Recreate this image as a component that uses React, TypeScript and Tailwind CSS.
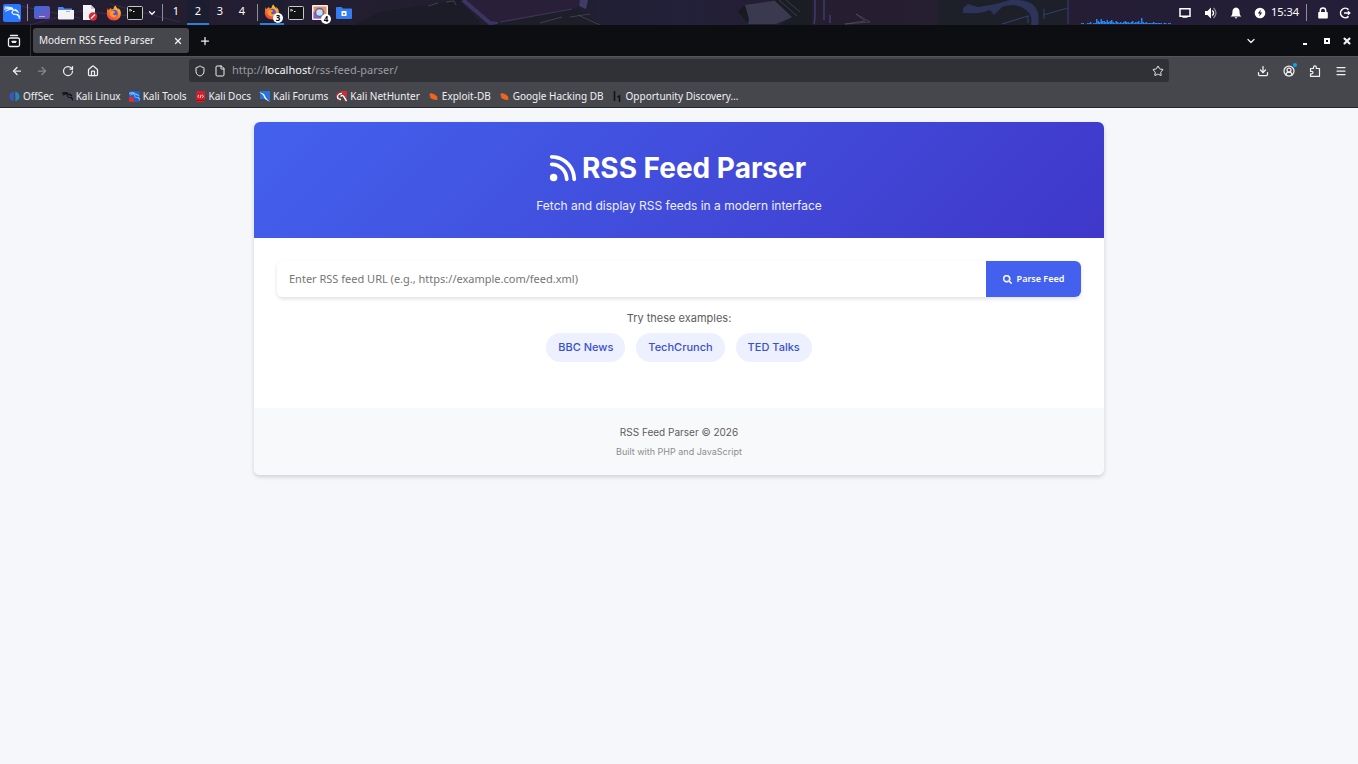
import { useState, type FormEvent, type ReactNode } from "react";
import { FaMagnifyingGlass, FaRss } from "react-icons/fa6";
import { SiKalilinux } from "react-icons/si";
import {
  ArrowLeft,
  ArrowRight,
  ChevronDown,
  CircleUserRound,
  Download,
  File,
  House,
  Menu,
  Plus,
  RotateCw,
  Shield,
  Star,
  X,
} from "lucide-react";

const examples = [
  { name: "BBC News", url: "https://feeds.bbci.co.uk/news/rss.xml" },
  { name: "TechCrunch", url: "https://techcrunch.com/feed/" },
  { name: "TED Talks", url: "https://feeds.feedburner.com/tedtalks_video" },
];

const cpuBars = [1, 1, 0, 0, 1, 1, 2, 0, 1, 1, 5, 3, 2, 5, 3, 3, 2, 4, 2, 3, 4, 2, 1, 3, 2, 1, 2, 1, 2, 3, 2, 2, 1, 2, 3, 1, 2, 2, 3, 1, 6, 2, 1, 2, 1, 1, 1, 1, 2, 1, 1, 1, 1, 1, 0, 1, 1, 0, 1, 1];

function FirefoxIcon() {
  return (
    <svg viewBox="0 0 32 32" className="size-4">
      <defs>
        <linearGradient id="fox" x1="0.8" y1="0" x2="0.2" y2="1">
          <stop offset="0" stopColor="#ffd43b" />
          <stop offset="0.45" stopColor="#ff8a1e" />
          <stop offset="1" stopColor="#f0304f" />
        </linearGradient>
      </defs>
      <path
        d="M29 12c-1-3-3-5-5-6 1 2 1 3 1 4-2-4-5-5-6-9-3 2-4 5-4 7-2 0-3 1-4 1 0-1-1-2-1-3-2 1-3 2-4 4H5c-1-1-1-3-1-4-2 3-2 6-2 8-2 10 5 17 14 17 10 0 16-9 13-19z"
        fill="url(#fox)"
      />
      <circle cx="16" cy="17" r="7.5" fill="#5a50d8" />
      <path d="M10 12c2-2 5-1 6 1 2 0 3 1 2 2l-4 2c0 3 4 5 7 2 1 5-5 7-9 5-5-2-6-8-2-12z" fill="#ff9a22" />
    </svg>
  );
}

function TerminalIcon() {
  return (
    <svg viewBox="0 0 16 14" className="h-3.5 w-4">
      <rect x="0.5" y="0.5" width="15" height="13" rx="1" fill="#111214" stroke="#c6c8cc" />
      <path d="M3 3v2.500M3.500 3.700l1.500 1M6 5.500h1.500" stroke="#fff" strokeWidth="1" fill="none" />
    </svg>
  );
}

function FolderIcon() {
  return (
    <svg viewBox="0 0 16 14" className="h-3.5 w-4">
      <path d="M0 1.500Q0 1 .5 1H5l1.500 1.500H14V5H0z" fill="#4e86ee" />
      <path d="M0 4h16v8.500q0 1-1 1H1q-1 0-1-1z" fill="#f1f3f6" />
      <path d="M8 5.500h4" stroke="#aab0ba" />
    </svg>
  );
}

function DocumentIcon() {
  return (
    <svg viewBox="0 0 16 16" className="size-4">
      <path d="M1 0h8l4 4v11H1z" fill="#f4f4f6" />
      <path d="M9 0v4h4z" fill="#c8cad0" />
      <circle cx="11" cy="11.500" r="4.200" fill="#d92b36" />
      <path d="M9 13.500l4-4" stroke="#fff" strokeWidth="1.300" />
    </svg>
  );
}

function Separator() {
  return <span className="h-[17px] w-px bg-[#8f8c9b]" />;
}

function CountBadge({ children }: { children: ReactNode }) {
  return (
    <span className="absolute -right-0.5 -bottom-0.5 flex size-2 items-center justify-center rounded-full bg-white text-[8px] font-bold text-black ring-1 ring-white">
      {children}
    </span>
  );
}

// Dim laptop wallpaper that shows through the panel
function PanelWallpaper() {
  return (
    <svg viewBox="0 0 1358 25" preserveAspectRatio="none" className="absolute inset-0 size-full">
      <defs>
        <linearGradient id="wall">
          <stop offset="0" stopColor="#241d33" />
          <stop offset="0.3" stopColor="#221e30" />
          <stop offset="0.42" stopColor="#201f31" />
          <stop offset="0.5" stopColor="#22203a" />
          <stop offset="0.6" stopColor="#261d31" />
          <stop offset="0.7" stopColor="#261e31" />
          <stop offset="0.85" stopColor="#241d36" />
          <stop offset="1" stopColor="#251e38" />
        </linearGradient>
      </defs>
      <rect width="1358" height="25" fill="url(#wall)" />
      <path d="M30 25l50-14 60 6M110 4l70 18M20 6l60 12" stroke="#3d3150" strokeWidth="0.800" fill="none" />
      <path d="M355 25l25-13 80-12 22 25z" fill="#1c1c28" />
      <path d="M428 6l10-3M446 2l8-1 2 4" stroke="#3f3f4c" fill="none" />
      <path d="M464 0h118l-6 8-82 15z" fill="#291f38" />
      <path d="M463 0l27 23 8 1" stroke="#3a3563" strokeWidth="4" fill="none" />
      <path d="M492 25l84-17 24 17z" fill="#1e1e28" />
      <path d="M500 22l72-13" stroke="#3b365c" strokeWidth="1.200" />
      <path d="M540 23l22-6M570 17l20-3M578 15l22 10" stroke="#4b4c62" strokeWidth="0.700" fill="none" />
      <path d="M580 0h8l-2 9-7-3z" fill="#3f3d68" />
      <path d="M737 11l8-6 35-5 13 17-17 7h-28z" fill="#3b394f" />
      <path d="M737 11l8-6 4 14-1 5z" fill="#181a22" />
      <path d="M774 0h38v25h-32l12-8z" fill="#1b1d24" />
      <path d="M779 0l18 16M786 0l14 12" stroke="#4a4b5c" strokeWidth="0.700" />
      <path d="M815 0v18l-1 6M824 0v20M830 15v8" stroke="#3c4178" strokeWidth="1.300" fill="none" />
      <path d="M845 24l20-3-9-7 14 8z" fill="#22212b" stroke="#565566" strokeWidth="0.600" />
      <path d="M938 0h130v25H938z" fill="#1d2028" />
      <path d="M963 8l5-4 10 3 18-3 14-4q14-1 22 4 9 7 6 21h-7q2-10-5-15-10-8-24-3l-8 8-4-5q-9 4-18 3l-9 0z" fill="#2e3459" />
      <path d="M1002 24l26-8v7M1043 15l25-7M1044 9v10M1068 0v24" stroke="#343b69" strokeWidth="1.200" fill="none" />
    </svg>
  );
}

function SystemPanel() {
  const workspace = "flex h-full w-[22px] items-center justify-center border-b-2 text-[11px]";
  return (
    <div className="relative flex h-[25px] items-center overflow-hidden text-white">
      <PanelWallpaper />
      <div className="relative flex h-full w-full items-center">
        <button aria-label="Applications" className="ml-[3px] flex size-[18px] items-center justify-center rounded-xs bg-[#2777ff]">
          <SiKalilinux className="size-4 stroke-white stroke-1" />
        </button>
        <span className="ml-1.5 flex items-center gap-1.5">
          <Separator />
          <span className="flex items-center gap-2">
            <button aria-label="Show desktop" className="flex h-[13px] w-4 items-end justify-center rounded-xs bg-linear-to-br from-[#3169d8] to-[#7152bb] pb-0.5">
              <span className="h-px w-1.5 bg-[#b3b5e9]" />
            </button>
            <button aria-label="Files"><FolderIcon /></button>
            <button aria-label="Text editor"><DocumentIcon /></button>
            <button aria-label="Firefox"><FirefoxIcon /></button>
          </span>
        </span>
        <button aria-label="Terminal" className="ml-[5px]"><TerminalIcon /></button>
        <button aria-label="More launchers" className="mr-[5px] ml-1"><ChevronDown className="size-2.5" strokeWidth={3} /></button>
        <Separator />
        <div className="mr-1 ml-0.5 flex h-full">
          <button className={`${workspace} border-transparent`}>1</button>
          <button className={`${workspace} border-[#2d7fd8] bg-[#1b1e30]`}>2</button>
          <button className={`${workspace} border-transparent`}>3</button>
          <button className={`${workspace} border-transparent`}>4</button>
        </div>
        <Separator />
        <button aria-label="Firefox windows" className="ml-0.5 flex h-full w-6 items-center justify-center border-b-2 border-[#2d7fd8] bg-[#1b1e30]">
          <span className="relative"><FirefoxIcon /><CountBadge>3</CountBadge></span>
        </button>
        <button aria-label="Terminal window" className="ml-1"><TerminalIcon /></button>
        <button aria-label="Image viewer windows" className="relative ml-2">
          <svg viewBox="0 0 16 16" className="size-4">
            <rect width="16" height="15" rx="1" fill="#f2f2f5" />
            <path d="M1.500 1.500h13v12h-13z" fill="#ef8e66" />
            <path d="M1.500 13.500v-6l7-3 6 9z" fill="#8e62cb" />
            <circle cx="7.500" cy="7.500" r="4" fill="#c8dcf5" stroke="#5f6591" strokeWidth="1.500" />
          </svg>
          <CountBadge>4</CountBadge>
        </button>
        <button aria-label="File manager window" className="ml-2">
          <svg viewBox="0 0 16 14" className="h-3.5 w-4">
            <path d="M0 2q0-1 1-1h4.500L7 2.500h8q1 0 1 1V12q0 1-1 1H1q-1 0-1-1z" fill="#347cf0" />
            <path d="M5.500 5h5v5h-5z" fill="#fff" />
            <path d="M7 7h2v1.500H7z" fill="#347cf0" />
          </svg>
        </button>

        <div className="ml-auto flex h-full items-center">
          <svg viewBox="0 0 90 25" className="mr-2 h-[25px] w-[90px]">
            {cpuBars.map((value, i) => (
              <rect key={i} x={i * 1.5} y={24 - value} width="1.500" height={value} fill="#2587ee" />
            ))}
          </svg>
          <button aria-label="Display">
            <svg viewBox="0 0 12 12" className="size-3" fill="none" stroke="#fff" strokeWidth="1.500">
              <path d="M1 1.750h10v7.500H1zM3.500 10h5" />
            </svg>
          </button>
          <button aria-label="Volume" className="ml-3.5">
            <svg viewBox="0 0 12 12" className="size-3" fill="none" stroke="#fff">
              <path d="M0 4h2.500L6 .5v11L2.500 8H0z" fill="#fff" stroke="none" />
              <path d="M7.300 3.500q2.500 2.500 0 5" strokeWidth="1.400" />
              <path d="M8.500 1q5 5 0 10" stroke="#8d8b9c" strokeWidth="1.200" />
            </svg>
          </button>
          <button aria-label="Notifications" className="ml-[13px]">
            <svg viewBox="0 0 12 12" className="size-3" fill="#fff">
              <path d="M6 .5c-2.500.3-3.600 2-3.600 4.500 0 2.400-.5 3.500-1.900 4.500h11C10 8.500 9.600 7.400 9.600 5 9.600 2.500 8.500.8 6 .5zM4.500 10.300h3L6 11.700z" />
            </svg>
          </button>
          <button aria-label="Power" className="ml-3">
            <svg viewBox="0 0 12 12" className="size-3">
              <circle cx="6" cy="6" r="5.300" fill="#fff" />
              <path d="M6.700 2.500L3.800 6.500h1.900L5.300 9.500l2.900-4H6.300z" fill="#251e38" />
            </svg>
          </button>
          <time className="mr-[7px] ml-[5px] text-[11px]">15:34</time>
          <Separator />
          <button aria-label="Lock screen" className="ml-2.5">
            <svg viewBox="0 0 12 12" className="size-3">
              <path d="M3.300 6V3.800a2.700 2.700 0 015.400 0V6" fill="none" stroke="#fff" strokeWidth="1.500" />
              <rect x="1.200" y="5" width="9.600" height="6.500" rx="0.800" fill="#fff" />
            </svg>
          </button>
          <button aria-label="Log out" className="mr-[7px] ml-2.5">
            <svg viewBox="0 0 12 12" className="size-3" fill="none" stroke="#fff" strokeWidth="1.600">
              <path d="M9.500 2.600a4.700 4.700 0 100 6.800M5 6h5" />
              <path d="M8.800 3.600L11.800 6l-3 2.400z" fill="#fff" stroke="none" />
            </svg>
          </button>
        </div>
      </div>
    </div>
  );
}

function TabBar() {
  return (
    <div className="flex h-[31px] items-center bg-[#0d0e12] text-[#f0f0f2]">
      <button aria-label="Recent browsing" className="flex w-7 justify-center">
        <svg viewBox="0 0 14 14" className="size-3.5" fill="none" stroke="#f0f0f2" strokeWidth="1.300" strokeLinecap="round">
          <path d="M3.500 1.500h7" />
          <rect x="1.500" y="4" width="11" height="8.500" rx="1.500" />
          <path d="M5 7.500h4M5.500 8.300h3" />
        </svg>
      </button>
      <span className="ml-0.5 h-full w-px bg-[#303138]" />
      <div className="ml-0.5 flex h-[25px] w-[156px] items-center justify-between rounded-[3px] bg-[#46474d] px-1.5 text-[10px]">
        <span>Modern RSS Feed Parser</span>
        <button aria-label="Close tab"><X className="size-2.5" strokeWidth={3} /></button>
      </div>
      <button aria-label="New tab" className="ml-2.5"><Plus className="size-3" strokeWidth={2.5} /></button>
      <button aria-label="List all tabs" className="ml-auto"><ChevronDown className="size-3" strokeWidth={2.5} /></button>
      <button aria-label="Minimize" className="ml-11 flex h-2 w-2 items-end">
        <span className="mx-auto h-0.5 w-1 bg-white" />
      </button>
      <button aria-label="Maximize" className="ml-[15px] h-1.5 w-1.5 border-2 border-white" />
      <button aria-label="Close window" className="mr-1.5 ml-3"><X className="size-2.5" strokeWidth={5} /></button>
    </div>
  );
}

function NavBar() {
  return (
    <div className="flex h-7 items-center border-t border-[#55565c] text-[#f0f0f2]">
      <div className="flex w-[189px] items-center gap-[13px] pl-[11px]">
        <button aria-label="Back"><ArrowLeft className="size-3" strokeWidth={2.5} /></button>
        <button aria-label="Forward" disabled className="text-[#88898e]"><ArrowRight className="size-3" strokeWidth={2.5} /></button>
        <button aria-label="Reload" className="ml-px"><RotateCw className="size-3" strokeWidth={2.5} /></button>
        <button aria-label="Home"><House className="size-3" strokeWidth={2.5} /></button>
      </div>
      <div className="flex h-[23px] flex-1 items-center rounded-[3px] bg-[#303136] px-[5px]">
        <Shield className="size-3" strokeWidth={2} />
        <File className="ml-2 size-3" strokeWidth={2} />
        <p className="ml-1.5 flex-1 text-[11px] text-[#9b9ca1]">
          http://<span className="text-[#f4f4f6]">localhost</span>/rss-feed-parser/
        </p>
        <button aria-label="Bookmark this page"><Star className="size-3" strokeWidth={2} /></button>
      </div>
      <div className="flex w-[189px] items-center justify-end gap-3.5 pr-[11px]">
        <button aria-label="Downloads"><Download className="size-3" strokeWidth={2.5} /></button>
        <button aria-label="Account" className="relative">
          <CircleUserRound className="size-3" strokeWidth={2.5} />
          <span className="absolute -top-0.5 -right-0.5 size-1 rounded-full bg-[#00a8f5]" />
        </button>
        <button aria-label="Extensions">
          <svg viewBox="0 0 12 12" className="size-3" fill="none" stroke="#f0f0f2" strokeWidth="1.200" strokeLinejoin="round">
            <path d="M1.500 3.500h3V2.200a1.400 1.400 0 012.800 0v1.300h3.200v7.900h-9V8.800h1.300a1.200 1.200 0 000-2.400H1.500z" />
          </svg>
        </button>
        <button aria-label="Menu"><Menu className="size-3" strokeWidth={2.5} /></button>
      </div>
    </div>
  );
}

const orangeBug = (
  <svg viewBox="0 0 11 11" className="size-[11px]">
    <path d="M1 3.500L3 2l4 1.500L9.500 6 9 7.500l1 1-2.500.5L4 8 1.500 6l1-.8z" fill="#f0641e" />
  </svg>
);

const bookmarks = [
  {
    label: "OffSec",
    icon: (
      <svg viewBox="0 0 11 11" className="size-[11px]">
        <path d="M4.800 .5C2 1 .5 3 .5 5.500S2 9.500 4.600 10.300z" fill="#3558c8" />
        <path d="M6.200 .5C9 1 10.500 3 10.500 5.500S9 9.500 6.400 10.300z" fill="#2585b8" />
      </svg>
    ),
  },
  { label: "Kali Linux", icon: <SiKalilinux className="size-[11px] stroke-[#0b0b0d] stroke-1 text-[#0b0b0d]" /> },
  {
    label: "Kali Tools",
    icon: (
      <span className="relative">
        <SiKalilinux className="size-[11px] rounded-xs bg-[#1d60c4] stroke-[#8cc6ff] stroke-1 text-[#8cc6ff]" />
        <span className="absolute bottom-0 left-0 size-[5px] rounded-[1px] bg-[#e02b36]" />
      </span>
    ),
  },
  {
    label: "Kali Docs",
    icon: (
      <svg viewBox="0 0 11 11" className="size-[11px]">
        <path d="M1.500 0H10v11H1z" fill="#d51f2a" />
        <path d="M4 4L2.700 5.300 4 6.600M7.200 4l1.300 1.300-1.300 1.300M6 3.800l-.8 3" stroke="#fff" strokeWidth="0.900" fill="none" />
        <path d="M1 9.300h9" stroke="#8a1119" />
      </svg>
    ),
  },
  {
    label: "Kali Forums",
    icon: (
      <svg viewBox="0 0 11 11" className="size-[11px]">
        <path d="M1 0h10v10L8 8H1z" fill="#2474dc" />
        <path d="M0 1l5 2 2 4 4 4-5-3-2-4z" fill="#fff" />
      </svg>
    ),
  },
  {
    label: "Kali NetHunter",
    icon: (
      <svg viewBox="0 0 11 11" className="size-[11px]">
        <path d="M4 0h7v8z" fill="#dc2732" />
        <path d="M6 2.500Q1.500 2.500 1.500 5.500T5 8.500M4.500 5.500Q7 3.500 8 6l2.500 4" stroke="#fff" strokeWidth="1.500" fill="none" />
        <path d="M0 5l3-3.500M1.500 8.500L5 10" stroke="#dc2732" strokeWidth="1.200" />
      </svg>
    ),
  },
  { label: "Exploit-DB", icon: orangeBug },
  { label: "Google Hacking DB", icon: orangeBug },
  {
    label: "Opportunity Discovery…",
    icon: (
      <svg viewBox="0 0 11 11" className="size-[11px]">
        <path d="M2.500 0v10M5.500 6l2-1V11" stroke="#111114" strokeWidth="1.500" fill="none" />
      </svg>
    ),
  },
];

function BookmarksBar() {
  return (
    <nav className="flex h-6 items-center gap-2 border-b border-[#24252a] pt-px pl-[9px] text-[10px] text-[#f0f0f2]">
      {bookmarks.map((bookmark) => (
        <a key={bookmark.label} href="#" className="flex items-center gap-[3px] whitespace-nowrap">
          {bookmark.icon}
          {bookmark.label}
        </a>
      ))}
    </nav>
  );
}

export default function App() {
  const [feedUrl, setFeedUrl] = useState("");

  const handleSubmit = (e: FormEvent) => {
    e.preventDefault();
  };

  return (
    <div className="min-h-screen bg-[#f5f7fb] font-['Inter',sans-serif]">
      <div className="font-['Noto_Sans',sans-serif]">
        <SystemPanel />
        <TabBar />
        <div className="bg-[#46474d]">
          <NavBar />
          <BookmarksBar />
        </div>
      </div>

      <main className="mx-auto mt-3.5 max-w-[850px] overflow-hidden rounded-md bg-white shadow-[0_2px_4px_rgba(0,0,0,0.16)]">
        {/* Header */}
        <header className="bg-linear-135 from-[#4361ee] to-[#3f37c9] px-6 pt-6 pb-[21px] text-center text-white">
          <h1 className="flex items-center justify-center gap-1 pr-1 text-[28px] leading-[44px] font-bold">
            <FaRss className="size-[30px]" />
            RSS Feed Parser
          </h1>
          <p className="mt-[5px] text-[12px] leading-[22px] text-[#eef0fe]">Fetch and display RSS feeds in a modern interface</p>
        </header>

        {/* Feed form */}
        <section className="px-[23px] pt-[23px] pb-[46px]">
          <form onSubmit={handleSubmit} className="flex h-9 rounded-md shadow-[0_2px_4px_rgba(0,0,0,0.12)]">
            <input
              type="text"
              aria-label="RSS feed URL"
              value={feedUrl}
              onChange={(e) => setFeedUrl(e.target.value)}
              placeholder="Enter RSS feed URL (e.g., https://example.com/feed.xml)"
              className="min-w-0 flex-1 rounded-l-md bg-white px-3 font-['Noto_Sans',sans-serif] text-[11px] outline-none placeholder:text-[#757575]"
            />
            <button
              type="submit"
              className="flex w-[95px] items-center justify-center gap-[5px] rounded-r-md bg-[#4361ee] font-['Noto_Sans',sans-serif] text-[9px] font-semibold text-white"
            >
              <FaMagnifyingGlass className="size-[9px] stroke-white stroke-[30]" />
              Parse Feed
            </button>
          </form>

          <div className="mt-3 text-center">
            <p className="text-[11px] leading-[18px] text-[#5c5c5c]">Try these examples:</p>
            <div className="mt-1.5 flex justify-center gap-[11px]">
              {examples.map((example) => (
                <button
                  key={example.name}
                  type="button"
                  onClick={() => setFeedUrl(example.url)}
                  className="h-[29px] rounded-full bg-[#edf0fe] px-3 text-[11px] font-medium text-[#3a50cf]"
                >
                  {example.name}
                </button>
              ))}
            </div>
          </div>
        </section>

        {/* Footer */}
        <footer className="bg-[#f8f9fa] py-4 text-center">
          <p className="text-[10px] leading-4 text-[#5c5c5c]">RSS Feed Parser © 2026</p>
          <p className="mt-1 text-[9px] leading-[15px] text-[#8d8d8d]">Built with PHP and JavaScript</p>
        </footer>
      </main>
    </div>
  );
}
